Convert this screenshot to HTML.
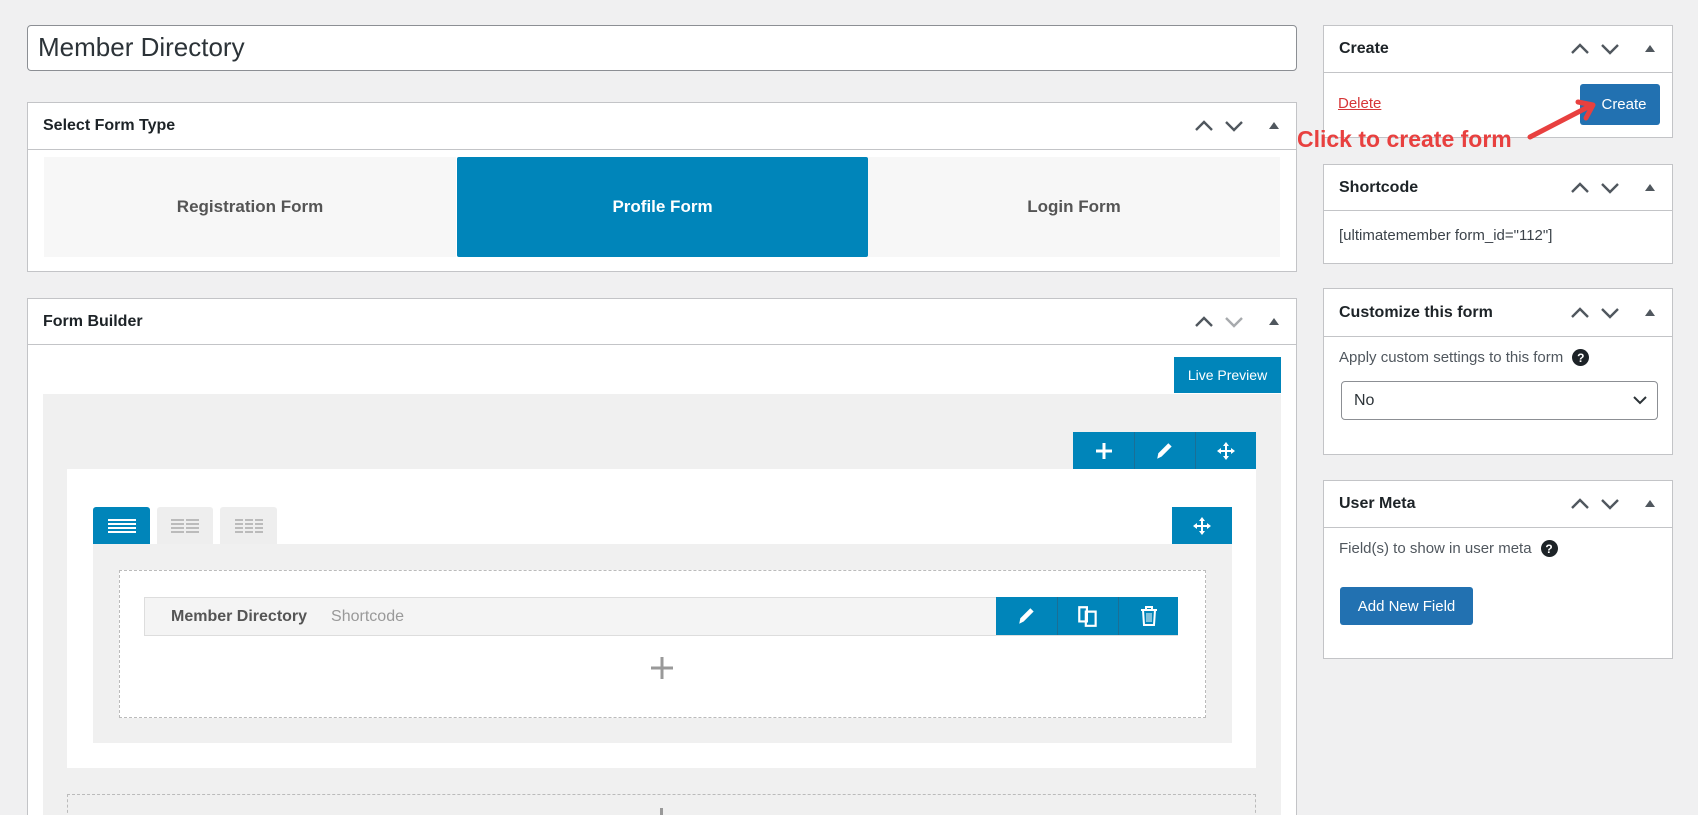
<!DOCTYPE html>
<html><head><meta charset="utf-8"><style>
*{box-sizing:border-box;margin:0;padding:0}
html,body{width:1698px;height:815px;overflow:hidden}
body{background:#f0f0f1;font-family:"Liberation Sans",sans-serif;color:#1d2327;position:relative}
#wrap{position:absolute;left:0;top:0;width:1698px;height:815px;overflow:hidden}
.abs{position:absolute}
.box{position:absolute;background:#fff;border:1px solid #c3c4c7}
.hd{position:absolute;left:0;right:0;top:0;border-bottom:1px solid #c3c4c7;font-size:16px;font-weight:bold;color:#1d2327;padding-left:15px;display:flex;align-items:center}
.ctl{position:absolute;right:14px;top:0;height:100%;display:flex;align-items:center}
.blue{background:#0085ba}
.cell{position:absolute;top:0;height:100%;display:flex;align-items:center;justify-content:center;border-left:1px solid #1a6f96}
</style></head><body><div id="wrap">

<div class="abs" style="left:27px;top:25px;width:1270px;height:46px;background:#fff;border:1px solid #8c8f94;border-radius:4px;font-size:26px;padding:6px 10px;color:#2c3338">Member Directory</div>

<div class="box" style="left:27px;top:102px;width:1270px;height:170px">
 <div class="hd" style="height:47px">Select Form Type
  <div class="ctl"><svg width="90" height="20" viewBox="0 0 90 20"><path d="M4 14l8-8 8 8M34 6l8 8 8-8" fill="none" stroke="#50575e" stroke-width="2.4"/><path d="M77 13l5-7 5 7z" fill="#50575e"/></svg></div></div>
 <div class="abs" style="left:16px;top:54px;width:412px;height:100px;background:#f7f7f7;display:flex;align-items:center;justify-content:center;font-size:17px;font-weight:bold;color:#555">Registration Form</div>
 <div class="abs blue" style="left:429px;top:54px;width:411px;height:100px;display:flex;align-items:center;justify-content:center;font-size:17px;font-weight:bold;color:#fff;border-radius:2px">Profile Form</div>
 <div class="abs" style="left:840px;top:54px;width:412px;height:100px;background:#f7f7f7;display:flex;align-items:center;justify-content:center;font-size:17px;font-weight:bold;color:#555">Login Form</div>
</div>

<div class="box" style="left:27px;top:298px;width:1270px;height:530px">
 <div class="hd" style="height:46px">Form Builder
  <div class="ctl"><svg width="90" height="20" viewBox="0 0 90 20"><path d="M4 14l8-8 8 8" fill="none" stroke="#50575e" stroke-width="2.4"/><path d="M34 6l8 8 8-8" fill="none" stroke="#a7aaad" stroke-width="2.4"/><path d="M77 13l5-7 5 7z" fill="#50575e"/></svg></div></div>
</div>
<div class="abs blue" style="left:1174px;top:357px;width:107px;height:36px;color:#fff;font-size:14px;display:flex;align-items:center;justify-content:center">Live Preview</div>
<div class="abs" style="left:43px;top:394px;width:1238px;height:430px;background:#f0f0f0"></div>
<div class="abs blue" style="left:1073px;top:432px;width:183px;height:37px">
 <div class="cell" style="left:0;width:61px;border:0"><svg width="18" height="18"><path d="M9 1v16M1 9h16" stroke="#fff" stroke-width="3"/></svg></div>
 <div class="cell" style="left:61px;width:61px"><svg width="20" height="20" viewBox="0 0 18 18"><path d="M2 16l1-5 9-9 3 3-9 9z" fill="#fff"/></svg></div>
 <div class="cell" style="left:122px;width:61px"><svg width="20" height="20" viewBox="0 0 20 20"><path d="M10 1l3 4h-2v4h4V7l4 3-4 3v-2h-4v4h2l-3 4-3-4h2v-4H5v2l-4-3 4-3v2h4V5H7z" fill="#fff"/></svg></div>
</div>
<div class="abs" style="left:67px;top:469px;width:1189px;height:299px;background:#fff"></div>
<div class="abs blue" style="left:93px;top:507px;width:57px;height:37px;border-radius:3px 3px 0 0;display:flex;align-items:center;justify-content:center"><svg width="28" height="16"><g stroke="#fff" stroke-width="2"><path d="M0 2h28M0 6h28M0 10h28M0 14h28"/></g></svg></div>
<div class="abs" style="left:157px;top:507px;width:56px;height:37px;background:#eee;border-radius:3px 3px 0 0;display:flex;align-items:center;justify-content:center"><svg width="28" height="16"><g stroke="#bbb" stroke-width="2"><path d="M0 2h13M0 6h13M0 10h13M0 14h13M15 2h13M15 6h13M15 10h13M15 14h13"/></g></svg></div>
<div class="abs" style="left:220px;top:507px;width:57px;height:37px;background:#eee;border-radius:3px 3px 0 0;display:flex;align-items:center;justify-content:center"><svg width="28" height="16"><g stroke="#bbb" stroke-width="2"><path d="M0 2h8M0 6h8M0 10h8M0 14h8M10 2h8M10 6h8M10 10h8M10 14h8M20 2h8M20 6h8M20 10h8M20 14h8"/></g></svg></div>
<div class="abs blue" style="left:1172px;top:507px;width:60px;height:37px;display:flex;align-items:center;justify-content:center"><svg width="20" height="20" viewBox="0 0 20 20"><path d="M10 1l3 4h-2v4h4V7l4 3-4 3v-2h-4v4h2l-3 4-3-4h2v-4H5v2l-4-3 4-3v2h4V5H7z" fill="#fff"/></svg></div>
<div class="abs" style="left:93px;top:544px;width:1139px;height:199px;background:#f0f0f0"></div>
<div class="abs" style="left:119px;top:570px;width:1087px;height:148px;background:#fff;border:1px dashed #bbb"></div>
<div class="abs" style="left:144px;top:597px;width:1034px;height:39px;background:#f4f4f4;border:1px solid #ddd;font-size:16px;display:flex;align-items:center;padding-left:26px"><b style="color:#555">Member Directory</b><span style="color:#999;margin-left:24px">Shortcode</span></div>
<div class="abs blue" style="left:996px;top:597px;width:182px;height:38px">
 <div class="cell" style="left:0;width:61px;border:0"><svg width="20" height="20" viewBox="0 0 18 18"><path d="M2 16l1-5 9-9 3 3-9 9z" fill="#fff"/></svg></div>
 <div class="cell" style="left:61px;width:61px"><svg width="24" height="24" viewBox="0 0 22 22"><path d="M3 3h7v13H3zM9 7h9v13H9z" fill="none" stroke="#fff" stroke-width="2"/></svg></div>
 <div class="cell" style="left:122px;width:60px"><svg width="18" height="20" viewBox="0 0 18 20"><path d="M1 4h16M6 4V1h6v3M3 4l1 15h10l1-15" fill="none" stroke="#fff" stroke-width="2"/><path d="M7 7v9M9 7v9M11 7v9" stroke="#fff"/></svg></div>
</div>
<div class="abs" style="left:651px;top:657px;width:22px;height:22px"><svg width="22" height="22"><path d="M11 0v22M0 11h22" stroke="#999" stroke-width="3"/></svg></div>
<div class="abs" style="left:67px;top:794px;width:1189px;height:40px;border:1px dashed #bbb"></div>
<div class="abs" style="left:660px;top:808px;width:3px;height:10px;background:#999"></div>

<div class="box" style="left:1323px;top:25px;width:350px;height:113px">
 <div class="hd" style="height:47px">Create<div class="ctl"><svg width="90" height="20" viewBox="0 0 90 20"><path d="M4 14l8-8 8 8M34 6l8 8 8-8" fill="none" stroke="#50575e" stroke-width="2.4"/><path d="M77 13l5-7 5 7z" fill="#50575e"/></svg></div></div>
 <div class="abs" style="left:14px;top:69px;font-size:15px;color:#d63638;text-decoration:underline">Delete</div>
 <div class="abs" style="left:256px;top:58px;width:80px;height:41px;background:#2271b1;border-radius:3px;color:#fff;font-size:15px;display:flex;align-items:center;justify-content:center;padding-left:8px">Create</div>
</div>
<div class="abs" style="left:1297px;top:126px;font-size:23px;font-weight:bold;color:#e8403f;white-space:nowrap">Click to create form</div>
<svg class="abs" style="left:1520px;top:95px" width="80" height="50"><path d="M10 42L68 12" stroke="#e8403f" stroke-width="5" stroke-linecap="round"/><path d="M58 7l15 3-7 13" fill="none" stroke="#e8403f" stroke-width="5" stroke-linecap="round" stroke-linejoin="round"/></svg>

<div class="box" style="left:1323px;top:164px;width:350px;height:100px">
 <div class="hd" style="height:46px">Shortcode<div class="ctl"><svg width="90" height="20" viewBox="0 0 90 20"><path d="M4 14l8-8 8 8M34 6l8 8 8-8" fill="none" stroke="#50575e" stroke-width="2.4"/><path d="M77 13l5-7 5 7z" fill="#50575e"/></svg></div></div>
 <div class="abs" style="left:15px;top:62px;font-size:15px;color:#3c434a">[ultimatemember form_id="112"]</div>
</div>

<div class="box" style="left:1323px;top:288px;width:350px;height:167px">
 <div class="hd" style="height:48px">Customize this form<div class="ctl"><svg width="90" height="20" viewBox="0 0 90 20"><path d="M4 14l8-8 8 8M34 6l8 8 8-8" fill="none" stroke="#50575e" stroke-width="2.4"/><path d="M77 13l5-7 5 7z" fill="#50575e"/></svg></div></div>
 <div class="abs" style="left:15px;top:60px;font-size:15px;color:#50575e;display:flex;align-items:center;gap:9px">Apply custom settings to this form<span style="width:17px;height:17px;border-radius:50%;background:#1d2327;color:#fff;font-size:12px;font-weight:bold;display:inline-flex;align-items:center;justify-content:center">?</span></div>
 <div class="abs" style="left:17px;top:92px;width:317px;height:39px;border:1px solid #8c8f94;border-radius:4px;font-size:16px;padding:10px 12px;color:#2c3338">No<svg style="position:absolute;right:10px;top:13px" width="14" height="10"><path d="M1 2l6 6 6-6" fill="none" stroke="#2c3338" stroke-width="2"/></svg></div>
</div>

<div class="box" style="left:1323px;top:480px;width:350px;height:179px">
 <div class="hd" style="height:47px">User Meta<div class="ctl"><svg width="90" height="20" viewBox="0 0 90 20"><path d="M4 14l8-8 8 8M34 6l8 8 8-8" fill="none" stroke="#50575e" stroke-width="2.4"/><path d="M77 13l5-7 5 7z" fill="#50575e"/></svg></div></div>
 <div class="abs" style="left:15px;top:59px;font-size:15px;color:#50575e;display:flex;align-items:center;gap:9px">Field(s) to show in user meta<span style="width:17px;height:17px;border-radius:50%;background:#1d2327;color:#fff;font-size:12px;font-weight:bold;display:inline-flex;align-items:center;justify-content:center">?</span></div>
 <div class="abs" style="left:16px;top:106px;width:133px;height:38px;background:#2271b1;border-radius:3px;color:#fff;font-size:15px;display:flex;align-items:center;justify-content:center">Add New Field</div>
</div>
</div></body></html>
